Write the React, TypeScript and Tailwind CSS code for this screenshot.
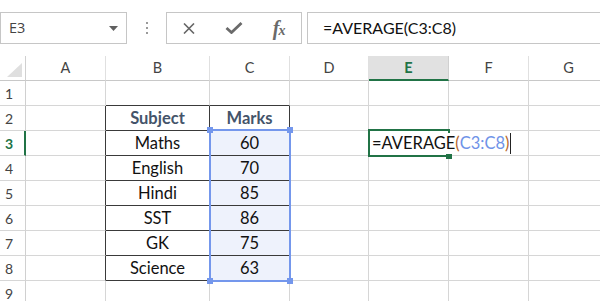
import React from "react";

const colLetters = ["A", "B", "C", "D", "E", "F", "G"];
const colWidths = ["w-[80px]", "w-[104px]", "w-[80px]", "w-[79px]", "w-[80px]", "w-[80px]", "w-[80px]"];

const data: Record<number, [string, string]> = {
  2: ["Subject", "Marks"],
  3: ["Maths", "60"],
  4: ["English", "70"],
  5: ["Hindi", "85"],
  6: ["SST", "86"],
  7: ["GK", "75"],
  8: ["Science", "63"],
};

function Cell({ row, col }: { row: number; col: number }) {
  const inTable = row >= 2 && row <= 8;
  const rightDark = inTable && col >= 0 && col <= 2;
  const bottomDark = row >= 1 && row <= 8 && (col === 1 || col === 2);
  const selected = col === 2 && row >= 3 && row <= 8;
  let text = "";
  if (inTable && col === 1) text = data[row][0];
  if (inTable && col === 2) text = data[row][1];
  const header = row === 2;
  return (
    <div
      className={[
        "h-[25px] shrink-0 border-r border-b flex items-center justify-center text-[16.5px] leading-none",
        colWidths[col],
        rightDark ? "border-r-[#3a3a3a]" : "border-r-[#d6d6d6]",
        bottomDark ? "border-b-[#3a3a3a]" : "border-b-[#d6d6d6]",
        selected ? "bg-[#eef2fc]" : "bg-white",
        header ? "font-bold text-[#44546a]" : "text-[#111]",
      ].join(" ")}
    >
      {text}
    </div>
  );
}

export default function App() {
  const rows = [1, 2, 3, 4, 5, 6, 7, 8, 9];
  return (
    <div className="w-[600px] h-[301px] overflow-hidden bg-white font-['Lato',sans-serif] text-[#222]">
      {/* top bar */}
      <div className="h-[56px] flex items-start pt-[12px]">
        <div className="w-[127px] h-[32px] shrink-0 border border-[#c6c6c6] flex items-center justify-between pl-[8px] pr-[8px]">
          <span className="font-['Open_Sans',sans-serif] text-[14.5px] text-[#444]">E3</span>
          <svg width="9" height="5" viewBox="0 0 9 5">
            <path d="M0 0 L9 0 L4.5 5 Z" fill="#606060" />
          </svg>
        </div>
        <div className="w-[39px] h-[32px] shrink-0 flex flex-col items-center justify-center gap-[3px]">
          <div className="w-[2px] h-[2px] bg-[#9a9a9a]" />
          <div className="w-[2px] h-[2px] bg-[#9a9a9a]" />
          <div className="w-[2px] h-[2px] bg-[#9a9a9a]" />
        </div>
        <div className="w-[136px] h-[32px] shrink-0 border border-[#c6c6c6] grid grid-cols-3 items-center">
          <div className="flex justify-center">
            <svg width="12" height="11" viewBox="0 0 12 11">
              <path d="M1 0.5 L11 10.5 M11 0.5 L1 10.5" stroke="#666" strokeWidth="1.6" />
            </svg>
          </div>
          <div className="flex justify-center">
            <svg width="18" height="12" viewBox="0 0 18 12">
              <path d="M1.5 6 L6.5 10.5 L16.5 1" stroke="#6a6a6a" strokeWidth="2.8" fill="none" />
            </svg>
          </div>
          <div className="flex justify-center">
            <span className="font-['Liberation_Serif',serif] italic font-bold text-[20px] text-[#6a6a6a] leading-none tracking-[-1px]">
              f<span className="text-[14px]">x</span>
            </span>
          </div>
        </div>
        <div className="ml-[5px] flex-1 h-[32px] border border-[#c6c6c6] border-r-0 flex items-center pl-[15px]">
          <span className="text-[16px] text-[#111]">=AVERAGE(C3:C8)</span>
        </div>
      </div>

      {/* grid */}
      <div className="relative">
        <div className="flex flex-col">
          {/* column header */}
          <div className="flex">
            <div className="w-[26px] h-[25px] shrink-0 border-r border-b border-r-[#d0d0d0] border-b-[#c8c8c8] relative">
              <svg className="absolute left-[7px] top-[7px]" width="15" height="14" viewBox="0 0 15 14">
                <path d="M0 14 L15 14 L15 0 Z" fill="#dfdfdf" />
              </svg>
            </div>
            {colLetters.map((c, i) =>
              c === "E" ? (
                <div
                  key={c}
                  className={`h-[25px] shrink-0 border-r border-r-[#d0d0d0] border-b-2 border-b-[#217346] bg-[#e1e1e1] flex items-center justify-center text-[14.5px] font-bold text-[#217346] ${colWidths[i]}`}
                >
                  {c}
                </div>
              ) : (
                <div
                  key={c}
                  className={`h-[25px] shrink-0 border-r border-b border-r-[#e0e0e0] border-b-[#c8c8c8] flex items-center justify-center text-[14.5px] text-[#444] ${colWidths[i]}`}
                >
                  {c}
                </div>
              )
            )}
          </div>
          {rows.map((r) => (
            <div key={r} className="flex">
              {r === 3 ? (
                <div className="w-[26px] h-[25px] shrink-0 border-r-2 border-b border-r-[#217346] border-b-[#d6d6d6] flex items-center justify-center pr-[6px] text-[14px] font-bold text-[#217346]">
                  {r}
                </div>
              ) : (
                <div className="w-[26px] h-[25px] shrink-0 border-r border-b border-r-[#d0d0d0] border-b-[#d6d6d6] flex items-center justify-center pr-[7px] text-[14px] text-[#444]">
                  {r}
                </div>
              )}
              {colLetters.map((_, ci) => (
                <Cell key={ci} row={r} col={ci} />
              ))}
            </div>
          ))}
        </div>

        {/* range selection C3:C8 */}
        <div className="absolute left-[209px] top-[73px] w-[82px] h-[153px] border-2 border-[#7497ec]" />
        <div className="absolute left-[207px] top-[71px] w-[6px] h-[6px] bg-[#7497ec]" />
        <div className="absolute left-[287px] top-[71px] w-[6px] h-[6px] bg-[#7497ec]" />
        <div className="absolute left-[207px] top-[222px] w-[6px] h-[6px] bg-[#7497ec]" />
        <div className="absolute left-[287px] top-[222px] w-[6px] h-[6px] bg-[#7497ec]" />

        {/* active cell E3 */}
        <div className="absolute left-[368px] top-[73px] w-[82px] h-[28px] border-2 border-[#217346]" />
        <div className="absolute left-[446px] top-[98px] w-[6px] h-[5px] bg-[#217346]" />
        <div className="absolute left-[370px] top-[77px] w-[144px] h-[21px] bg-white flex items-center pl-[2px] text-[16.5px] text-[#111] whitespace-nowrap">
          <span className="shrink-0">=AVERAGE</span>
          <span className="shrink-0 text-[#b5652a]">(</span>
          <span className="shrink-0 text-[#6f93e8]">C3:C8</span>
          <span className="shrink-0 text-[#b5652a]">)</span>
          <div className="shrink-0 ml-[1px] w-px h-[21px] bg-[#222]" />
        </div>
      </div>
    </div>
  );
}
